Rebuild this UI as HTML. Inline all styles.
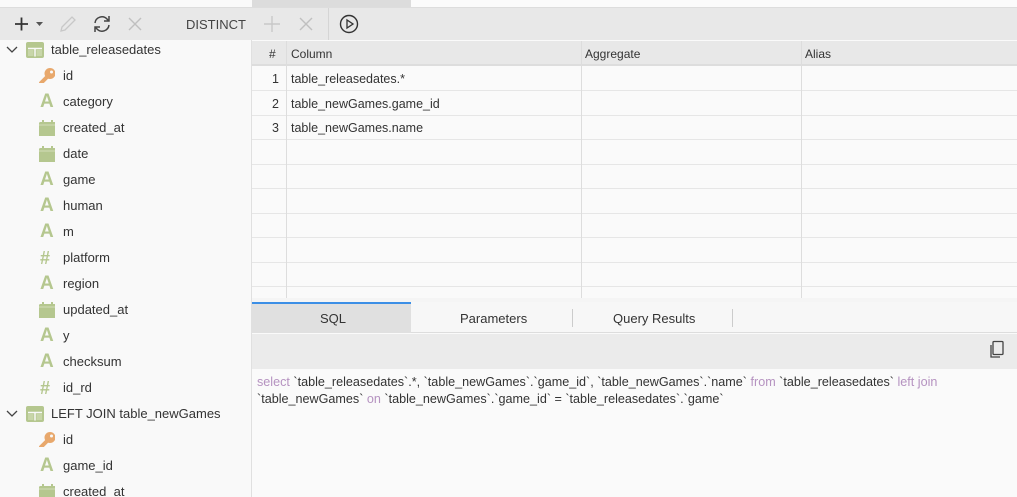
<!DOCTYPE html>
<html><head><meta charset="utf-8"><style>
*{margin:0;padding:0;box-sizing:border-box}
html,body{width:1017px;height:497px;overflow:hidden}
body{background:#fafafa;font-family:"Liberation Sans",sans-serif;font-size:12.5px;color:#333;position:relative}
.abs{position:absolute}
.row{position:absolute;left:0;height:26px;line-height:26px;width:251px;white-space:nowrap}
.row .t{position:absolute;left:63px;font-size:13px;color:#333}
.ic{position:absolute;left:39px;top:5px;width:16px;height:16px}
.A{position:absolute;left:40px;font-weight:bold;font-size:19px;color:#b5c78f;top:0;line-height:26px}
.H{position:absolute;left:40px;font-weight:bold;font-size:18px;color:#b5c78f;line-height:26px}
.gr{position:absolute;left:252px;width:765px;height:25px;border-bottom:1px solid #e6e6e6}
.gr span{position:absolute;top:1px;line-height:24px}
</style></head><body>
<div class="abs" style="left:0;top:0;width:252px;height:7px;background:#fafafa"></div>
<div class="abs" style="left:252px;top:0;width:159px;height:7px;background:#dcdcdc"></div>
<div class="abs" style="left:411px;top:0;width:606px;height:7px;background:#fbfbfb"></div>
<div class="abs" style="left:0;top:7px;width:1017px;height:1px;background:#ddd"></div>
<div class="abs" style="left:0;top:8px;width:1017px;height:32px;background:#e8e8e8"></div>
<div class="abs" style="left:328px;top:8px;width:1px;height:32px;background:#d5d5d5"></div>
<svg class="abs" style="left:12px;top:14px" width="34" height="20"><path d="M3 10h13M9.5 3.5v13" stroke="#333" stroke-width="1.8"/><path d="M24 8h7l-3.5 4z" fill="#555"/></svg>
<svg class="abs" style="left:58px;top:14px" width="20" height="20"><path d="M3 17l1-4L14 3l3 3L7 16z" fill="none" stroke="#c8c8c8" stroke-width="1.3"/></svg>
<svg class="abs" style="left:91px;top:13px" width="22" height="22"><path d="M4 10a7 7 0 0 1 12-4l2 2M18 12a7 7 0 0 1-12 4l-2-2" fill="none" stroke="#444" stroke-width="1.5"/><path d="M18 3v5h-5M4 19v-5h5" fill="none" stroke="#444" stroke-width="1.5"/></svg>
<svg class="abs" style="left:127px;top:16px" width="16" height="16"><path d="M2 2l12 12M14 2L2 14" stroke="#c0c0c0" stroke-width="1.4"/></svg>
<div class="abs" style="left:186px;top:17px;font-size:13px;color:#444">DISTINCT</div>
<svg class="abs" style="left:263px;top:15px" width="18" height="18"><path d="M1 9h16M9 1v16" stroke="#c8c8c8" stroke-width="1.4"/></svg>
<svg class="abs" style="left:298px;top:16px" width="16" height="16"><path d="M2 2l12 12M14 2L2 14" stroke="#c0c0c0" stroke-width="1.4"/></svg>
<svg class="abs" style="left:339px;top:14px" width="20" height="20"><circle cx="10" cy="10" r="8.5" fill="none" stroke="#333" stroke-width="1.4"/><path d="M8 6v8l6-4z" fill="none" stroke="#333" stroke-width="1.3"/></svg>
<div class="abs" style="left:0;top:40px;width:251px;height:457px;background:#f9f9f9"></div>
<div class="abs" style="left:251px;top:40px;width:1px;height:457px;background:#e0e0e0"></div>
<div id="sb"></div>
<div class="abs" style="left:252px;top:40px;width:765px;height:26px;background:#e8e8e8;border-top:1px solid #fafafa;border-bottom:2px solid #ddd"></div>
<div class="abs" style="left:269px;top:47px;font-size:12px">#</div>
<div class="abs" style="left:291px;top:47px;font-size:12px">Column</div>
<div class="abs" style="left:585px;top:47px;font-size:12px">Aggregate</div>
<div class="abs" style="left:805px;top:47px;font-size:12px">Alias</div>
<div class="abs" style="left:252px;top:66px;width:765px;height:232px;background:#fafafa"></div>
<div id="g"></div>
<div class="abs" style="left:286px;top:41px;width:1px;height:257px;background:#ddd"></div>
<div class="abs" style="left:581px;top:41px;width:1px;height:257px;background:#ddd"></div>
<div class="abs" style="left:801px;top:41px;width:1px;height:257px;background:#ddd"></div>
<div class="abs" style="left:252px;top:298px;width:765px;height:4px;background:#f5f5f5"></div>
<div class="abs" style="left:252px;top:302px;width:765px;height:31px;background:#f7f7f7;border-bottom:1px solid #ddd"></div>
<div class="abs" style="left:252px;top:302px;width:159px;height:31px;background:#e0e0e0;border-top:2px solid #3c8fe6"></div>
<div class="abs" style="left:320px;top:311px;font-size:13px">SQL</div>
<div class="abs" style="left:460px;top:311px;font-size:13px">Parameters</div>
<div class="abs" style="left:572px;top:309px;width:1px;height:18px;background:#ccc"></div>
<div class="abs" style="left:613px;top:311px;font-size:13px">Query Results</div>
<div class="abs" style="left:732px;top:309px;width:1px;height:18px;background:#ccc"></div>
<div class="abs" style="left:252px;top:334px;width:765px;height:35px;background:#ebebeb"></div>
<svg class="abs" style="left:988px;top:340px" width="18" height="20"><rect x="5" y="1.5" width="10" height="13" rx="1" fill="none" stroke="#444" stroke-width="1.3"/><path d="M3 5v12h9" fill="none" stroke="#444" stroke-width="1.3"/></svg>
<div class="abs" style="left:257px;top:374px;font-size:12.6px;line-height:17px;color:#333;white-space:nowrap"><span style="color:#b592c0">select</span> `table_releasedates`.*, `table_newGames`.`game_id`, `table_newGames`.`name` <span style="color:#b592c0">from</span> `table_releasedates` <span style="color:#b592c0">left join</span><br>`table_newGames` <span style="color:#b592c0">on</span> `table_newGames`.`game_id` = `table_releasedates`.`game`</div>
<script>
var items=[["T","table_releasedates"],["K","id"],["A","category"],["C","created_at"],["C","date"],["A","game"],["A","human"],["A","m"],["H","platform"],["A","region"],["C","updated_at"],["A","y"],["A","checksum"],["H","id_rd"],["T","LEFT JOIN table_newGames"],["K","id"],["A","game_id"],["C","created_at"]];
var h="";
items.forEach(function(it,i){var y=37+i*26;var ic="";
if(it[0]=="T"){h+='<div class="row" style="top:'+y+'px"><svg style="position:absolute;left:6px;top:8px" width="12" height="10"><path d="M1 2l5 5 5-5" fill="none" stroke="#444" stroke-width="1.3"/></svg><svg style="position:absolute;left:26px;top:5px" width="18" height="16"><rect x="0" y="0" width="18" height="16" rx="2" fill="#b5c78f"/><path d="M2 6.5h14M9 6.5v8" stroke="#f9f9f9" stroke-width="1.5"/><rect x="2" y="8" width="5.5" height="6" fill="#c8d6a9"/><rect x="10.5" y="8" width="5.5" height="6" fill="#c8d6a9"/></svg><span class="t" style="left:51px">'+it[1]+'</span></div>';return;}
if(it[0]=="K")ic='<svg class="ic" width="18" height="18" style="left:39px;top:4px"><circle cx="11" cy="6.5" r="5.5" fill="#e8a86c"/><path d="M8 10L2 16" stroke="#e8a86c" stroke-width="4" stroke-linecap="round"/><circle cx="12.5" cy="5" r="1.5" fill="#f9f9f9"/></svg>';
else if(it[0]=="A")ic='<span class="A">A</span>';
else if(it[0]=="H")ic='<span class="H">#</span>';
else ic='<svg class="ic" width="17" height="17"><rect x="0" y="2" width="17" height="15" rx="1.5" fill="#b5c78f"/><rect x="3" y="0" width="2" height="4" fill="#b5c78f"/><rect x="12" y="0" width="2" height="4" fill="#b5c78f"/><rect x="0" y="4.5" width="17" height="1" fill="#d2ddb8"/></svg>';
h+='<div class="row" style="top:'+y+'px">'+ic+'<span class="t">'+it[1]+'</span></div>';});
document.getElementById("sb").innerHTML=h;
var g="",r=["table_releasedates.*","table_newGames.game_id","table_newGames.name"];
for(var i=0;i<9;i++){var y=66+i*24.5;g+='<div class="gr" style="top:'+y+'px">'+(i<3?'<span style="left:20px">'+(i+1)+'</span><span style="left:39px">'+r[i]+'</span>':'')+'</div>';}
document.getElementById("g").innerHTML=g;
</script>
</body></html>
